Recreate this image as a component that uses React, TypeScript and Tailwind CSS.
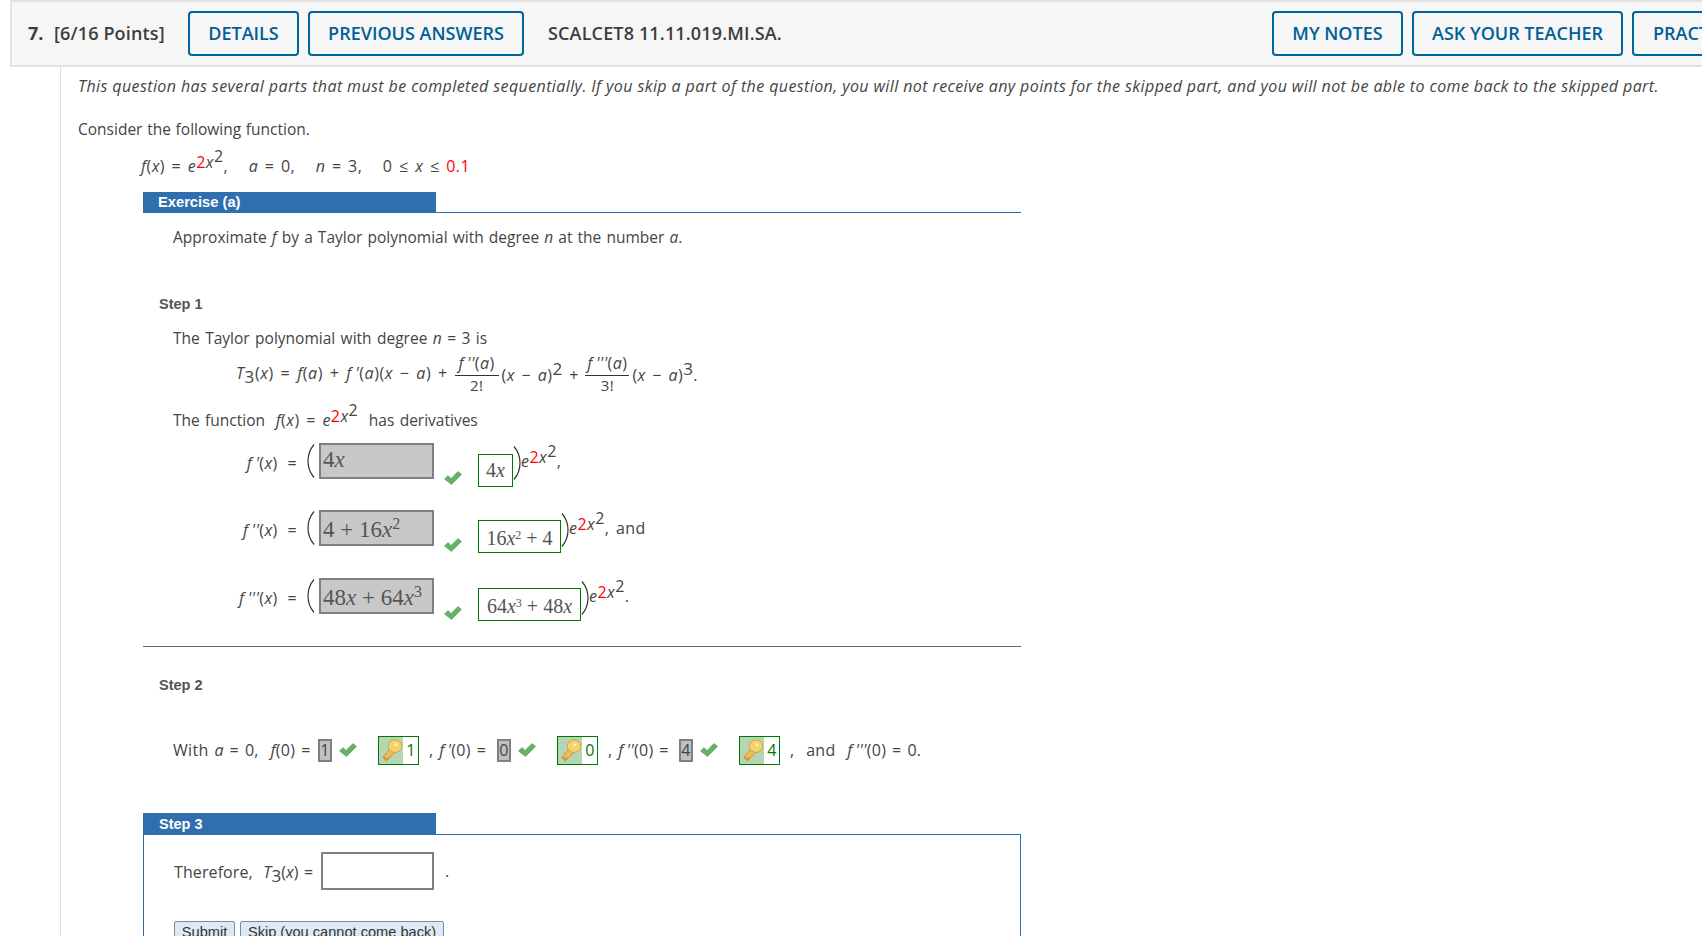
import type { ReactNode } from 'react';

const blue = 'border-2 border-[#00659c] rounded-[4px] h-[45px] flex items-center justify-center text-[#005f96] text-[18px] font-semibold shrink-0';
const mathLine = 'text-[16px] tracking-[0.45px] [word-spacing:2px]';
const tightLine = 'text-[16px] tracking-[0.3px] [word-spacing:1.4px]';
const stepLabel = "h-[24px] pl-[16px] pt-px flex items-center font-['Liberation_Sans',sans-serif] font-bold text-[14.5px] text-[#555]";

function I({ children }: { children: ReactNode }) {
  return <i>{children}</i>;
}

function Exp() {
  return (
    <span className="whitespace-nowrap">
      <I>e</I>
      <span className="text-[16px] align-[4px] leading-none">
        <span className="text-[#f00]">2</span>
        <I>x</I>
        <span className="text-[16px] align-[6px]">2</span>
      </span>
    </span>
  );
}

function Check({ className }: { className?: string }) {
  return (
    <svg viewBox="0 0 18 14" className={`w-[18px] h-[14px] shrink-0 ${className ?? ''}`}>
      <path d="M0.5 8 L4 4.5 L7 7.5 L14 0.5 L17.5 3.5 L7.5 13.5 Z" fill="#67b167" stroke="#559f55" strokeWidth="0.6" />
    </svg>
  );
}

function Key() {
  return (
    <svg viewBox="0 0 24 28" className="w-[21px] h-[25px]">
      <path d="M6 26 L2 22 L11 11 L16 16 Z" fill="#ecbf58" stroke="#c98f30" strokeWidth="1" />
      <path d="M6 25 L9 22 M3 21 L6 24" stroke="#c98f30" strokeWidth="1.5" />
      <ellipse cx="16" cy="9" rx="7.8" ry="7.2" fill="#f5d36c" stroke="#d09a35" strokeWidth="1" />
      <circle cx="17" cy="7.5" r="1.8" fill="#fff2b8" />
    </svg>
  );
}

function Paren({ right, className }: { right?: boolean; className?: string }) {
  return (
    <svg viewBox="0 0 8 34" className={`w-[8px] h-[34px] shrink-0 ${className ?? ''}`}>
      <path d={right ? 'M1 0.5 C9 10 9 24 1 33.5' : 'M7 0.5 C-1 10 -1 24 7 33.5'} fill="none" stroke="#333" strokeWidth="1.2" />
    </svg>
  );
}

function Math({ children }: { children: ReactNode }) {
  return <span className="font-['Liberation_Serif',serif] text-[#555]">{children}</span>;
}

function Frac({ top, bottom }: { top: ReactNode; bottom: ReactNode }) {
  return (
    <span className="inline-flex flex-col items-center w-[44px] leading-none mr-[3px]">
      <span className="border-b border-[#333] w-full text-center pb-[2px] h-[21px]">{top}</span>
      <span className="pt-[2px] text-[15px]">{bottom}</span>
    </span>
  );
}

function DerivRow({ label, input, answer, boxW, boxTop, tail, top }: {
  label: ReactNode; input: ReactNode; answer: ReactNode; boxW: string; boxTop: string; tail: ReactNode; top: string;
}) {
  return (
    <div className={`flex items-start h-[45px] ${top}`}>
      <div className={`w-[124px] text-right h-[40px] flex items-center justify-end ${mathLine}`}>{label}</div>
      <Paren className="ml-[10px] mr-[4px] mt-px" />
      <div className="w-[115px] h-[36px] bg-[#c8c8c8] border-2 border-[#808080] pl-[2px] flex items-center text-[23px] shrink-0">{input}</div>
      <Check className="ml-[10px] mt-[28px]" />
      <div className={`${boxW} ${boxTop} h-[33px] ml-[16px] border-[1.5px] border-[#007a00] flex items-center justify-center text-[20px] shrink-0`}>{answer}</div>
      <Paren right className="mt-[3px]" />
      <span className={mathLine}>{tail}</span>
    </div>
  );
}

function Given({ value }: { value: string }) {
  return <span className="w-[14px] h-[23px] bg-[#c0c0c0] border-2 border-[#808080] flex items-center justify-center text-[16px] shrink-0">{value}</span>;
}

function Answer({ value }: { value: string }) {
  return (
    <span className="w-[41px] h-[29px] border-[1.5px] border-[#007a00] flex shrink-0">
      <span className="w-[24px] bg-[#b5d6b5] flex items-center justify-center"><Key /></span>
      <span className="flex-1 flex items-center justify-center text-[#007a00] text-[16px] pl-px">{value}</span>
    </span>
  );
}

export default function App() {
  return (
    <div className="w-[1702px] h-[936px] overflow-hidden bg-white text-[15.5px] text-[#444] font-['Open_Sans',sans-serif]">
      <div className="ml-[10px] w-[1692px] h-[67px] bg-[#f6f6f6] border-y-2 border-l-2 border-[#e2e2e2] flex items-center text-[#3d3d3d] text-[18px] font-semibold whitespace-nowrap overflow-hidden">
        <span className="ml-[16px] w-[26px] shrink-0 font-bold">7.</span>
        <span className="w-[134px] shrink-0 tracking-[0.15px]">[6/16 Points]</span>
        <button className={`${blue} w-[111px]`}>DETAILS</button>
        <button className={`${blue} w-[216px] ml-[9px]`}>PREVIOUS ANSWERS</button>
        <span className="ml-[24px] w-[724px] shrink-0 tracking-[0.15px]">SCALCET8 11.11.019.MI.SA.</span>
        <button className={`${blue} w-[131px]`}>MY NOTES</button>
        <button className={`${blue} w-[211px] ml-[9px]`}>ASK YOUR TEACHER</button>
        <button className={`${blue} w-[180px] ml-[9px] !justify-start pl-[19px]`}>PRACTICE ANOTHER</button>
      </div>

      <div className="ml-[60px] h-[869px] border-l border-[#dcdcdc] pl-[17px] whitespace-nowrap">
        <div className="h-[38px] flex items-center italic text-[16px] tracking-[0.4px]">This question has several parts that must be completed sequentially. If you skip a part of the question, you will not receive any points for the skipped part, and you will not be able to come back to the skipped part.</div>
        <div className="h-[50px] flex items-center [word-spacing:0.7px]">Consider the following function.</div>
        <div className={`h-[31px] -mt-[7px] ml-[63px] flex items-baseline gap-[20.5px] ${mathLine}`}>
          <span><I>f</I>(<I>x</I>) = <Exp />,</span>
          <span><I>a</I> = 0,</span>
          <span><I>n</I> = 3,</span>
          <span>0 ≤ <I>x</I> ≤ <span className="text-[#f00]">0.1</span></span>
        </div>

        <div className="ml-[65px] w-[878px] mt-[13px]">
          <div className="h-[21px] border-b border-[#2f6fad]">
            <div className="w-[293px] h-[21px] bg-[#2f6fad] text-white font-['Liberation_Sans',sans-serif] font-bold text-[14.7px] pl-[15px] leading-[20px]">Exercise (a)</div>
          </div>
          <div className="pl-[30px] h-[49px] flex items-center [word-spacing:1.1px]">Approximate&nbsp;<I>f</I>&nbsp;by a Taylor polynomial with degree&nbsp;<I>n</I>&nbsp;at the number&nbsp;<I>a</I>.</div>

          <div className={`mt-[30px] ${stepLabel}`}>Step 1</div>
          <div className="h-[46px] pl-[30px] flex items-center [word-spacing:1.4px]">The Taylor polynomial with degree&nbsp;<I>n</I>&nbsp;= 3 is</div>
          <div className={`h-[24px] pl-[93px] flex items-center ${mathLine}`}>
            <span className="tracking-[0.6px] -mt-[2px]"><I>T</I><span className="text-[17px] align-[-4px] leading-none">3</span>(<I>x</I>) = <I>f</I>(<I>a</I>) + <I>f&thinsp;'</I>(<I>a</I>)(<I>x</I> − <I>a</I>) +&nbsp;</span>
            <Frac top={<><I>f&thinsp;''</I>(<I>a</I>)</>} bottom="2!" />
            <span className="-mt-[2px]">(<I>x</I> − <I>a</I>)<span className="text-[17px] align-[6px] leading-none">2</span> +&nbsp;</span>
            <Frac top={<><I>f&thinsp;'''</I>(<I>a</I>)</>} bottom="3!" />
            <span className="-mt-[2px]">(<I>x</I> − <I>a</I>)<span className="text-[17px] align-[6px] leading-none">3</span>.</span>
          </div>
          <div className="mt-[16px] h-[32px] pl-[30px] flex items-baseline [word-spacing:1.3px]">The function&nbsp;&nbsp;<span className={mathLine}><I>f</I>(<I>x</I>) = <Exp /></span>&nbsp;&nbsp;has derivatives</div>

          <div className="pl-[30px]">
            <DerivRow
              top="mt-[9px]"
              label={<span><I>f&thinsp;'</I>(<I>x</I>) <span className="ml-[3px]">=</span></span>}
              input={<span className="-mt-[4px]"><Math>4<I>x</I></Math></span>}
              answer={<span className="-mt-[1px]"><Math>4<I>x</I></Math></span>}
              boxW="w-[35px]"
              boxTop="mt-[11px]"
              tail={<span><Exp />,</span>}
            />
            <DerivRow
              top="mt-[22px]"
              label={<span><I>f&thinsp;''</I>(<I>x</I>) <span className="ml-[3px]">=</span></span>}
              input={<span className="mt-[3px]"><Math>4 + 16<I>x</I><span className="text-[16px] align-[8px] leading-none">2</span></Math></span>}
              answer={<span className="mt-[3px]"><Math>16<I>x</I><span className="text-[12px] align-[6px] leading-none">2</span> + 4</Math></span>}
              boxW="w-[83px]"
              boxTop="mt-[10px]"
              tail={<span><Exp />, and</span>}
            />
            <DerivRow
              top="mt-[23px]"
              label={<span><I>f&thinsp;'''</I>(<I>x</I>) <span className="ml-[3px]">=</span></span>}
              input={<span className="mt-[3px]"><Math>48<I>x</I> + 64<I>x</I><span className="text-[16px] align-[8px] leading-none">3</span></Math></span>}
              answer={<span className="mt-[3px]"><Math>64<I>x</I><span className="text-[12px] align-[6px] leading-none">3</span> + 48<I>x</I></Math></span>}
              boxW="w-[103px]"
              boxTop="mt-[10px]"
              tail={<span><Exp />.</span>}
            />
          </div>

          <div className="mt-[23px] border-t border-[#666]" />
          <div className={`mt-[26px] ${stepLabel}`}>Step 2</div>
          <div className={`mt-[38px] h-[30px] pl-[30px] flex items-center ${tightLine}`}>
            <span className="w-[145px]">With <I>a</I> = 0,&nbsp; <I>f</I>(0) =</span>
            <Given value="1" />
            <Check className="ml-[7px] mr-[21px]" />
            <Answer value="1" />
            <span className="ml-[10px] w-[68px]">, <I>f&thinsp;'</I>(0) =</span>
            <Given value="0" />
            <Check className="ml-[7px] mr-[21px]" />
            <Answer value="0" />
            <span className="ml-[10px] w-[71px]">, <I>f&thinsp;''</I>(0) =</span>
            <Given value="4" />
            <Check className="ml-[7px] mr-[21px]" />
            <Answer value="4" />
            <span className="ml-[10px]">,&nbsp; and&nbsp; <I>f&thinsp;'''</I>(0) = 0.</span>
          </div>

          <div className="mt-[48px] w-[293px] h-[22px] bg-[#2f6fad] text-white font-['Liberation_Sans',sans-serif] font-bold text-[14.5px] pl-[16px] pt-px leading-[21px]">Step 3</div>
          <div className="h-[200px] border border-[#2f6fad] -mt-px pt-[17px] pl-[30px]">
            <div className="flex items-center h-[38px] text-[16px] tracking-[0.1px] [word-spacing:1px]">
              <span className="w-[147px] pt-[2px]">Therefore,&nbsp; <I>T</I><span className="text-[17px] align-[-4px] leading-none">3</span>(<I>x</I>) =</span>
              <div className="w-[113px] h-[38px] border-2 border-[#808080] bg-white" />
              <span className="ml-[11px]">.</span>
            </div>
            <div className="mt-[31px] flex gap-[5px] font-['Liberation_Sans',sans-serif] text-[14.6px] text-[#333]">
              <button className="w-[61px] h-[24px] bg-[#dfe9f3] border border-[#6d8fb0] rounded-[2px]">Submit</button>
              <button className="w-[204px] h-[24px] bg-[#dfe9f3] border border-[#6d8fb0] rounded-[2px]">Skip (you cannot come back)</button>
            </div>
          </div>
        </div>
      </div>
    </div>
  );
}
